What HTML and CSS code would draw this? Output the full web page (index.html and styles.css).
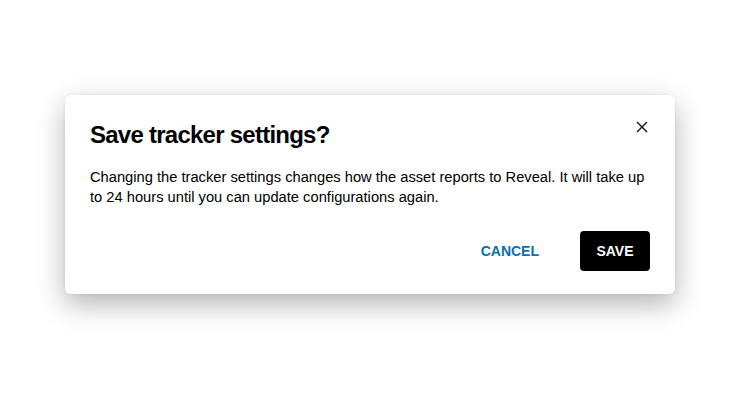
FILE: index.html
```html
<!DOCTYPE html>
<html lang="en">
<head>
<meta charset="utf-8">
<title>Save tracker settings?</title>
<link rel="stylesheet" href="styles.css">
</head>
<body>
<div class="stage">
  <div class="dialog" role="dialog" aria-labelledby="dlg-title">
    <div class="dialog-header">
      <h2 class="dialog-title" id="dlg-title">Save tracker settings?</h2>
      <button class="close-btn" aria-label="Close">
        <svg width="12" height="12" viewBox="0 0 12 12" aria-hidden="true">
          <path d="M1 1 L11 11 M11 1 L1 11" stroke="#111" stroke-width="1.4" fill="none"/>
        </svg>
      </button>
    </div>
    <p class="dialog-body">Changing the tracker settings changes how the asset reports to Reveal. It will take up to 24 hours until you can update configurations again.</p>
    <div class="dialog-footer">
      <button class="btn-text">CANCEL</button>
      <button class="btn-primary">SAVE</button>
    </div>
  </div>
</div>
</body>
</html>
```
FILE: styles.css
```css
html, body {
  margin: 0;
  padding: 0;
  background: #ffffff;
}
body {
  font-family: "Liberation Sans", Arial, sans-serif;
  color: #000;
}
.stage {
  padding: 95px 65px 0 65px;
  min-height: 409px;
  box-sizing: border-box;
}
.dialog {
  background: #fff;
  border-radius: 6px;
  box-shadow: 0 10px 28px rgba(0, 0, 0, 0.3), 0 0 3px rgba(0, 0, 0, 0.06);
  padding: 26px 25px 23px 25px;
  box-sizing: border-box;
  height: 199px;
}
.dialog-header {
  display: flex;
  justify-content: space-between;
  align-items: flex-start;
}
.dialog-title {
  margin: 0;
  font-size: 24px;
  line-height: 28px;
  font-weight: 700;
  letter-spacing: -0.75px;
}
.close-btn {
  background: none;
  border: 0;
  padding: 0;
  margin: 0 2px 0 0;
  width: 12px;
  height: 12px;
  display: flex;
  cursor: pointer;
}
.dialog-body {
  margin: 18px 0 0 0;
  font-size: 14.7px;
  line-height: 20px;
  letter-spacing: 0;
}
.dialog-footer {
  display: flex;
  justify-content: flex-end;
  align-items: center;
  gap: 41px;
  margin-top: 24px;
}
.btn-text {
  background: none;
  border: 0;
  padding: 0;
  font-family: inherit;
  font-size: 14px;
  font-weight: 700;
  color: #0a6fb3;
  cursor: pointer;
}
.btn-primary {
  background: #000;
  color: #fff;
  border: 0;
  border-radius: 4px;
  width: 70px;
  height: 40px;
  font-family: inherit;
  font-size: 14px;
  font-weight: 700;
  cursor: pointer;
}
```
